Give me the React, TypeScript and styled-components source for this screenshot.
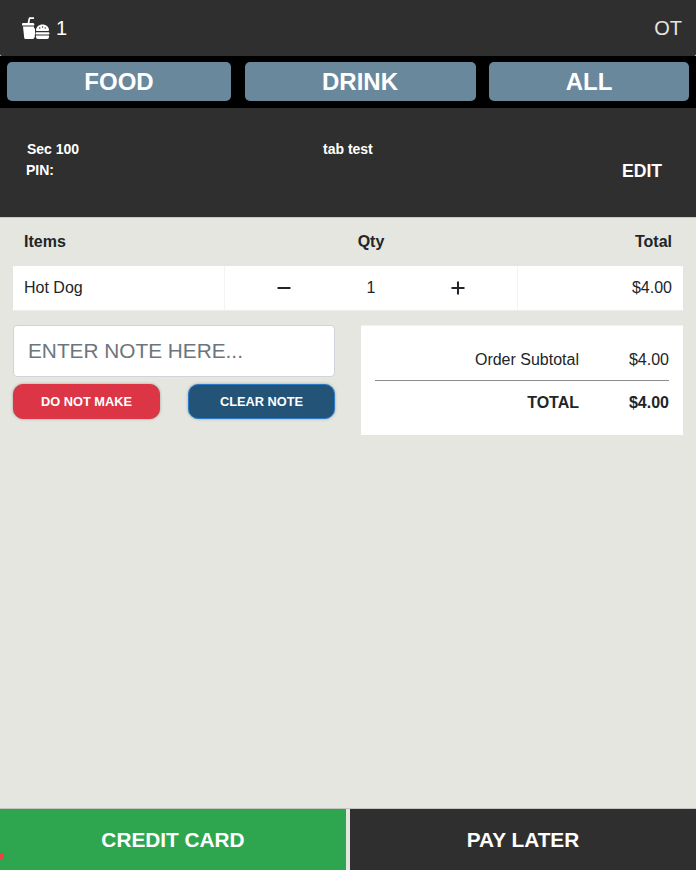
import React from "react";
import styled, { createGlobalStyle } from "styled-components";

const GlobalStyle = createGlobalStyle`
  html, body {
    margin: 0;
    padding: 0;
  }
  body {
    font-family: "Liberation Sans", Arial, sans-serif;
    background: #e6e6e0;
  }
  * {
    box-sizing: border-box;
  }
`;

const MealIcon = () => (
  <svg width="28" height="22" viewBox="0 0 28 22" fill="#fff">
    {/* straw */}
    <path d="M5.6 6 L6.6 1.2 Q6.8 0.2 7.8 0.2 H12 V1.9 H8.2 L7.4 6 Z" />
    {/* lid */}
    <path d="M1 6 H11 Q12.2 6 12.2 7.2 V8.4 H0 V7 Q0 6 1 6 Z" />
    {/* cup */}
    <path d="M1 9.6 H12 V12 Q12.6 11 13 11 V16 L12.8 20 Q11.6 22 11 22 H3.4 Q2.4 22 2.2 20.8 Z" />
    {/* burger */}
    <path d="M14 13.2 C14 10 17 7.6 20.5 7.6 C24 7.6 27 10 27 13.2 Q27 14 26.2 14 H14.8 Q14 14 14 13.2 Z" />
    <path d="M14.4 15.2 H26.6 Q27.4 15.2 27.4 16.2 Q27.4 17.4 26.4 17.4 H14.6 Q13.6 17.4 13.6 16.2 Q13.6 15.2 14.4 15.2 Z" />
    <path d="M14 18.6 H27 V20 Q27 22 25 22 H16 Q14 22 14 20 Z" />
    <circle cx="17.8" cy="11" r="0.7" fill="#2f2f2f" />
    <circle cx="20.6" cy="10" r="0.7" fill="#2f2f2f" />
    <circle cx="23.2" cy="11" r="0.7" fill="#2f2f2f" />
  </svg>
);

const Page = styled.div`
  min-height: 100vh;
  display: flex;
  flex-direction: column;
  position: relative;
  color: #212529;
`;

const TopBar = styled.header`
  height: 56px;
  background: #2f2f2f;
  display: flex;
  align-items: center;
  justify-content: space-between;
  padding: 0 14px 0 22px;
  border-radius: 0 0 2px 2px;
`;

const OrderCount = styled.div`
  display: flex;
  align-items: center;
  gap: 6px;
  color: #fff;
  font-size: 20px;
`;

const OrderType = styled.div`
  color: #e6e6e0;
  font-size: 20px;
`;

const TabBar = styled.nav`
  height: 52px;
  background: #000;
  display: flex;
  justify-content: space-between;
  padding: 6px 7px 7px;
`;

const Tab = styled.button<{ $width: number }>`
  width: ${(p) => p.$width}px;
  height: 39px;
  border: 0;
  padding: 0;
  border-radius: 5px;
  background: #6a889c;
  color: #fff;
  font-family: inherit;
  font-size: 24px;
  font-weight: 700;
`;

const InfoPanel = styled.section`
  height: 110px;
  background: #2f2f2f;
  border-bottom: 1px solid #c9c9c4;
  display: grid;
  grid-template-columns: 297px 299px 1fr;
  padding: 32px 0 0 26px;
  color: #fff;
  font-weight: 700;
  font-size: 14px;
  line-height: 18px;
`;

const InfoLines = styled.div`
  display: flex;
  flex-direction: column;
  gap: 3px;
`;

const SectionName = styled.div`
  padding-left: 1px;
`;

const EditButton = styled.div`
  font-size: 17.6px;
  line-height: 20px;
  margin-top: 21px;
`;

const Main = styled.main`
  flex: 1;
  background: #e6e6e0;
  padding: 0 13px;
`;

const ItemGrid = styled.div`
  display: grid;
  grid-template-columns: 211px 294px 165px;
  align-items: center;
`;

const ItemHeader = styled(ItemGrid)`
  height: 48px;
  font-size: 16px;
  font-weight: 700;
`;

const ItemRow = styled(ItemGrid)`
  height: 45px;
  background: #fff;
  border-bottom: 1px solid #eeeeea;
  font-size: 16px;
`;

const NameCell = styled.div`
  padding-left: 11px;
`;

const QtyHead = styled.div`
  text-align: center;
`;

const QtyCell = styled.div`
  height: 100%;
  display: grid;
  grid-template-columns: repeat(3, 87px);
  justify-content: center;
  align-items: center;
  justify-items: center;
  border-left: 1px solid #f4f4f2;
  border-right: 1px solid #f4f4f2;
`;

const TotalCell = styled.div`
  text-align: right;
  padding-right: 11px;
`;

const QtyIcon = styled.svg`
  width: 14px;
  height: 14px;
  stroke: #212529;
  stroke-width: 2;
  fill: none;
`;

const LowerRow = styled.div`
  display: flex;
  justify-content: space-between;
  align-items: flex-start;
  margin-top: 14px;
`;

const NoteColumn = styled.div`
  width: 322px;
`;

const NoteInput = styled.input`
  display: block;
  width: 100%;
  height: 52px;
  border: 1px solid #ced4da;
  border-radius: 4px;
  background: #fff;
  padding: 0 14px;
  font-family: inherit;
  font-size: 20.8px;
  &::placeholder {
    color: #6c757d;
    opacity: 1;
  }
`;

const NoteActions = styled.div`
  display: flex;
  justify-content: space-between;
  margin-top: 7px;
`;

const NoteButton = styled.button<{ $bg: string; $edge: string }>`
  width: 147px;
  height: 35px;
  border: 1px solid ${(p) => p.$edge};
  border-radius: 10px;
  background: ${(p) => p.$bg};
  color: #fff;
  font-family: inherit;
  font-size: 12.8px;
  font-weight: 700;
  padding: 0;
  box-shadow: 0 0 3px rgba(0, 0, 0, 0.3);
`;

const Summary = styled.div`
  width: 322px;
  height: 110px;
  background: #fff;
  padding: 14px 14px 0;
  border-top: 1px solid #f0f0ec;
`;

const SummaryRow = styled.div<{ $strong?: boolean; $ruled?: boolean }>`
  height: ${(p) => (p.$ruled ? 41 : 44)}px;
  display: grid;
  grid-template-columns: 204px 90px;
  align-items: center;
  text-align: right;
  font-size: 16px;
  font-weight: ${(p) => (p.$strong ? 700 : 400)};
  border-bottom: ${(p) => (p.$ruled ? "1px solid #8c8c8c" : "0")};
`;

const Footer = styled.footer`
  height: 62px;
  display: grid;
  grid-template-columns: 346px 346px;
  justify-content: space-between;
  background: #e6e6e0;
  border-top: 1px solid #c4c4bf;
`;

const FooterButton = styled.button<{ $bg: string }>`
  border: 0;
  padding: 0;
  background: ${(p) => p.$bg};
  color: #fff;
  font-family: inherit;
  font-size: 20.8px;
  font-weight: 700;
`;

const RedDot = styled.span`
  position: absolute;
  left: -2px;
  bottom: 11px;
  width: 6px;
  height: 6px;
  border-radius: 50%;
  background: #ee4040;
`;

export default function App() {
  return (
    <Page>
      <GlobalStyle />
      <TopBar>
        <OrderCount>
          <MealIcon />1
        </OrderCount>
        <OrderType>OT</OrderType>
      </TopBar>
      <TabBar>
        <Tab $width={224}>FOOD</Tab>
        <Tab $width={231}>DRINK</Tab>
        <Tab $width={200}>ALL</Tab>
      </TabBar>
      <InfoPanel>
        <InfoLines>
          <SectionName>Sec 100</SectionName>
          <div>PIN:</div>
        </InfoLines>
        <div>tab test</div>
        <EditButton>EDIT</EditButton>
      </InfoPanel>
      <Main>
        <ItemHeader>
          <NameCell>Items</NameCell>
          <QtyHead>Qty</QtyHead>
          <TotalCell>Total</TotalCell>
        </ItemHeader>
        <ItemRow>
          <NameCell>Hot Dog</NameCell>
          <QtyCell>
            <QtyIcon viewBox="0 0 14 14">
              <path d="M0.5 7H13.5" />
            </QtyIcon>
            <span>1</span>
            <QtyIcon viewBox="0 0 14 14">
              <path d="M0.5 7H13.5M7 0.5V13.5" />
            </QtyIcon>
          </QtyCell>
          <TotalCell>$4.00</TotalCell>
        </ItemRow>
        <LowerRow>
          <NoteColumn>
            <NoteInput placeholder="ENTER NOTE HERE..." />
            <NoteActions>
              <NoteButton $bg="#dc3545" $edge="#dc3545">
                DO NOT MAKE
              </NoteButton>
              <NoteButton $bg="#235478" $edge="#2a7ac8">
                CLEAR NOTE
              </NoteButton>
            </NoteActions>
          </NoteColumn>
          <Summary>
            <SummaryRow $ruled>
              <span>Order Subtotal</span>
              <span>$4.00</span>
            </SummaryRow>
            <SummaryRow $strong>
              <span>TOTAL</span>
              <span>$4.00</span>
            </SummaryRow>
          </Summary>
        </LowerRow>
      </Main>
      <Footer>
        <FooterButton $bg="#2ea64f">CREDIT CARD</FooterButton>
        <FooterButton $bg="#2f2f2f">PAY LATER</FooterButton>
      </Footer>
      <RedDot />
    </Page>
  );
}
